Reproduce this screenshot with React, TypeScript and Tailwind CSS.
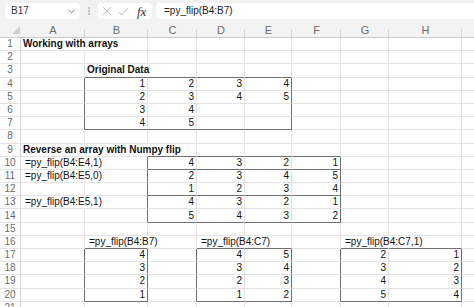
import { ChevronDown } from "lucide-react";

type CellData = { v: string; bold?: boolean; num?: boolean; formula?: boolean };

const COLS = ["A", "B", "C", "D", "E", "F", "G", "H", "I"];
const ROWS = 21;

const data: Record<string, CellData> = {};

// put a run of numbers across a row, starting at a column letter
const putNums = (row: number, start: string, vals: number[]) => {
    const s = COLS.indexOf(start);
    vals.forEach((n, i) => {
        data[`${COLS[s + i]}${row}`] = { v: String(n), num: true };
    });
};

data.A1 = { v: "Working with arrays", bold: true };
data.B3 = { v: "Original Data", bold: true };
putNums(4, "B", [1, 2, 3, 4]);
putNums(5, "B", [2, 3, 4, 5]);
putNums(6, "B", [3, 4]);
putNums(7, "B", [4, 5]);

data.A9 = { v: "Reverse an array with Numpy flip", bold: true };
data.A10 = { v: "=py_flip(B4:E4,1)", formula: true };
data.A11 = { v: "=py_flip(B4:E5,0)", formula: true };
data.A13 = { v: "=py_flip(B4:E5,1)", formula: true };
putNums(10, "C", [4, 3, 2, 1]);
putNums(11, "C", [2, 3, 4, 5]);
putNums(12, "C", [1, 2, 3, 4]);
putNums(13, "C", [4, 3, 2, 1]);
putNums(14, "C", [5, 4, 3, 2]);

data.B16 = { v: "=py_flip(B4:B7)", formula: true };
data.D16 = { v: "=py_flip(B4:C7)", formula: true };
data.G16 = { v: "=py_flip(B4:C7,1)", formula: true };
[4, 3, 2, 1].forEach((n, i) => putNums(17 + i, "B", [n]));
[[4, 5], [3, 4], [2, 3], [1, 2]].forEach((p, i) => putNums(17 + i, "D", p));
[[2, 1], [3, 2], [4, 3], [5, 4]].forEach((p, i) => putNums(17 + i, "G", p));

// outlined ranges (column index A = 0)
const boxes = [
    { c0: 1, c1: 4, r0: 4, r1: 7 },
    { c0: 2, c1: 5, r0: 10, r1: 14 },
    { c0: 1, c1: 1, r0: 17, r1: 20 },
    { c0: 3, c1: 4, r0: 17, r1: 20 },
    { c0: 6, c1: 7, r0: 17, r1: 20 },
];
const innerLines = [
    { c0: 2, c1: 5, r: 10 },
    { c0: 2, c1: 5, r: 12 },
];

// text spills over the right gridline of these cells
const spill = new Set(["A1", "B3", "A9", "B9", "A10", "A11", "A13", "B16", "D16", "G16"]);

const bottomDark = (r: number, c: number) =>
    boxes.some((b) => c >= b.c0 && c <= b.c1 && (r === b.r1 || r === b.r0 - 1)) ||
    innerLines.some((l) => c >= l.c0 && c <= l.c1 && r === l.r);

const rightDark = (r: number, c: number) =>
    boxes.some((b) => r >= b.r0 && r <= b.r1 && (c === b.c1 || c === b.c0 - 1));

function Toolbar() {
    return (
        <div className="h-[20px] bg-[#f1f1f1] flex items-start pt-[3px] pl-[5px]">
            <div className="w-[75px] h-[16px] bg-white rounded-[4px] flex items-center justify-between pl-[6px] pr-[3px] text-[10px] text-[#333]">
                <span>B17</span>
                <ChevronDown size={11} strokeWidth={1.6} className="text-[#555]" />
            </div>
            <div className="w-[18px] h-[16px] flex flex-col items-center justify-center gap-[1px]">
                <span className="w-[2px] h-[2px] rounded-full bg-[#b0b0b0]" />
                <span className="w-[2px] h-[2px] rounded-full bg-[#b0b0b0]" />
                <span className="w-[2px] h-[2px] rounded-full bg-[#b0b0b0]" />
            </div>
            <div className="w-[54px] h-[16px] bg-white rounded-[4px] flex items-center pl-[4px]">
                <svg width="10" height="10" viewBox="0 0 10 10">
                    <path d="M1 1L9 9M9 1L1 9" stroke="#bdbdbd" strokeWidth="1" fill="none" />
                </svg>
                <svg width="11" height="9" viewBox="0 0 11 9" className="ml-[6px]">
                    <path d="M1 5L4 8L10 1" stroke="#bdbdbd" strokeWidth="1" fill="none" />
                </svg>
                <span className="ml-[8px] font-['Liberation_Serif',serif] italic text-[13px] leading-none text-[#333]">
                    fx
                </span>
            </div>
            <div className="ml-[4px] flex-1 h-[16px] bg-white rounded-l-[4px] pl-[8px] flex items-center text-[10px] text-[#222]">
                =py_flip(B4:B7)
            </div>
        </div>
    );
}

function Sheet() {
    return (
        <div className="grid grid-cols-[21px_64px_63px_49px_48px_47px_49px_48px_73px_60px] grid-rows-[18px] auto-rows-[13.2px]">
            {/* corner */}
            <div className="bg-[#f3f3f3] border-b border-b-[#c9c9c9] flex items-end justify-end pr-[1px] pb-[3px]">
                <svg width="8" height="8" viewBox="0 0 8 8">
                    <path d="M8 0L8 8L0 8Z" fill="#d2d2d2" />
                </svg>
            </div>
            {COLS.map((col) => (
                <div
                    key={col}
                    className="bg-[#f3f3f3] bg-[linear-gradient(#d6d6d6,#d6d6d6)] bg-no-repeat bg-right-bottom bg-size-[1px_8px] border-b border-b-[#c9c9c9] flex items-center justify-center pt-[4px] text-[11px] text-[#6b6b6b]"
                >
                    {/* column I sits past the window edge */}
                    {col === "I" ? "" : col}
                </div>
            ))}

            {Array.from({ length: ROWS }, (_, i) => i + 1).map((r) => (
                <Row key={r} r={r} />
            ))}
        </div>
    );
}

function Row({ r }: { r: number }) {
    return (
        <>
            <div className="border-r border-r-[#d4d4d4] border-b border-b-[#e3e3e3] flex items-center justify-center text-[10px] text-[#6b6b6b]">
                {r}
            </div>
            {COLS.map((col, c) => {
                const key = `${col}${r}`;
                const cell = data[key];
                const rc = rightDark(r, c)
                    ? "border-r-[#707070]"
                    : spill.has(key)
                    ? "border-r-transparent"
                    : "border-r-[#e3e3e3]";
                const bc = bottomDark(r, c) ? "border-b-[#707070]" : "border-b-[#e3e3e3]";
                return (
                    <div
                        key={key}
                        className={`border-r border-b ${rc} ${bc} flex items-center whitespace-nowrap text-[10px] text-[#111] ${
                            cell?.num ? "justify-end pr-[2px]" : cell?.formula ? "pl-[4px]" : "pl-[2px]"
                        } ${cell?.bold ? "font-bold" : ""}`}
                    >
                        {cell?.v}
                    </div>
                );
            })}
        </>
    );
}

export default function App() {
    return (
        <div className="w-[474px] h-[307px] overflow-hidden bg-white font-['Liberation_Sans',Arial,sans-serif] leading-none">
            <Toolbar />
            <Sheet />
        </div>
    );
}
